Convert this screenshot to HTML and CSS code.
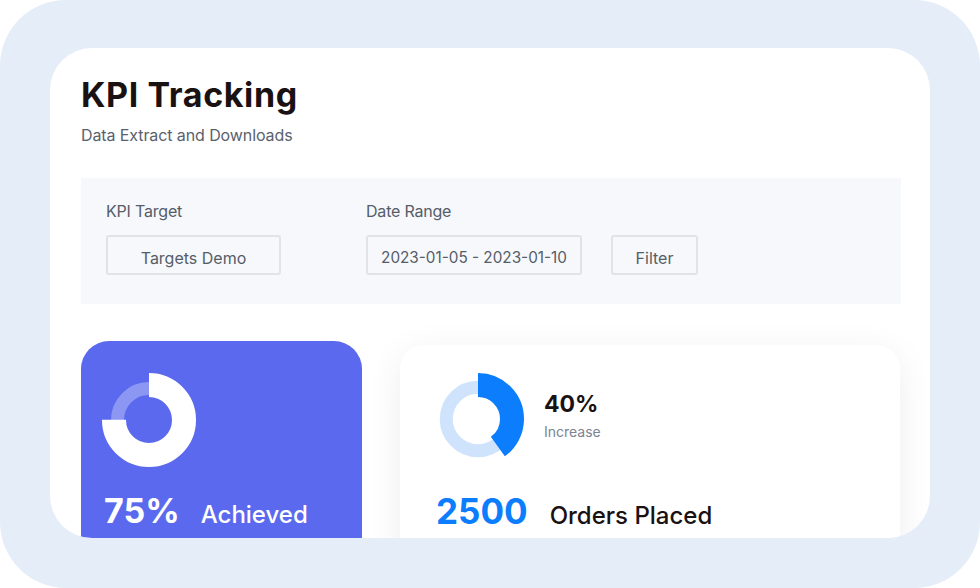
FILE: index.html
```html
<!DOCTYPE html>
<html>
<head>
<meta charset="utf-8">
<link rel="stylesheet" href="styles.css">
</head>
<body>
<div class="frame">
  <div class="sheet">
    <h1 class="title">KPI Tracking</h1>
    <p class="subtitle">Data Extract and Downloads</p>

    <div class="filters">
      <div class="field field-kpi">
        <div class="label">KPI Target</div>
        <div class="box box-kpi">Targets Demo</div>
      </div>
      <div class="field field-date">
        <div class="label">Date Range</div>
        <div class="box box-date">2023-01-05 - 2023-01-10</div>
      </div>
      <div class="box box-filter">Filter</div>
    </div>

    <div class="cards">
      <div class="card card-blue">
        <svg class="donut" width="94" height="94" viewBox="0 0 94 94">
          <circle cx="47" cy="47" r="31.5" fill="none" stroke="rgba(255,255,255,0.3)" stroke-width="13"/>
          <circle cx="47" cy="47" r="35" fill="none" stroke="#ffffff" stroke-width="24" stroke-dasharray="164.9 300" transform="rotate(-90 47 47)"/>
        </svg>
        <div class="stat">
          <span class="num num-white">75%</span>
          <span class="word word-white">Achieved</span>
        </div>
      </div>

      <div class="card card-white">
        <div class="top-row">
          <svg class="donut" width="94" height="94" viewBox="0 0 94 94">
            <circle cx="47" cy="47" r="31.75" fill="none" stroke="#cfe3fd" stroke-width="13"/>
            <circle cx="47" cy="47" r="34" fill="none" stroke="#0b7dfd" stroke-width="24" stroke-dasharray="85.5 300" transform="rotate(-90 47 47)"/>
          </svg>
          <div class="pct">
            <div class="pct-num">40%</div>
            <div class="pct-label">Increase</div>
          </div>
        </div>
        <div class="stat">
          <span class="num num-blue">2500</span>
          <span class="word word-dark">Orders Placed</span>
        </div>
      </div>
    </div>
  </div>
</div>
</body>
</html>
```

FILE: styles.css
```css
* { box-sizing: border-box; }
html, body {
  margin: 0;
  padding: 0;
  background: #ffffff;
}
body {
  font-family: Inter, "Noto Sans", sans-serif;
  width: 980px;
  height: 588px;
  overflow: hidden;
}
.frame {
  width: 980px;
  height: 588px;
  background: #e5edf8;
  border-radius: 66px;
  padding: 48px 50px 50px 50px;
}
.sheet {
  width: 880px;
  height: 490px;
  background: #ffffff;
  border-radius: 42px;
  overflow: hidden;
  padding: 27px 29px 0 31px;
}
.title {
  margin: 0;
  font-size: 34px;
  line-height: 40px;
  font-weight: 700;
  color: #1a1112;
  letter-spacing: 0.6px;
}
.subtitle {
  margin: 10px 0 0 0;
  font-size: 16px;
  line-height: 20px;
  color: #59616c;
  letter-spacing: -0.1px;
}
.filters {
  margin-top: 33px;
  width: 820px;
  height: 126px;
  background: #f6f8fb;
  padding: 23px 25px 0 25px;
  display: flex;
  align-items: flex-start;
}
.field { display: flex; flex-direction: column; }
.field-kpi { width: 260px; }
.label {
  font-size: 16px;
  line-height: 20px;
  color: #555d68;
  margin-bottom: 14px;
  letter-spacing: -0.2px;
}
.box {
  height: 40px;
  border: 2px solid #e0e3e8;
  border-radius: 3px;
  font-size: 16px;
  color: #555d68;
  display: flex;
  align-items: center;
  justify-content: center;
  padding-top: 5px;
  background: #f6f8fb;
}
.box-kpi { width: 175px; }
.box-date { width: 216px; font-size: 15.3px; }
.box-filter { width: 87px; margin-left: 29px; margin-top: 34px; }

.cards {
  margin-top: 37px;
  display: flex;
  align-items: flex-start;
  gap: 38px;
}
.card {
  height: 260px;
}
.card-blue {
  width: 281px;
  background: #5b69ee;
  border-radius: 28px;
  padding: 32px 21px 0 21px;
}
.card-white {
  width: 500px;
  margin-top: 4px;
  background: #ffffff;
  border-radius: 24px;
  box-shadow: 0 8px 36px rgba(20, 30, 60, 0.07);
  padding: 27px 31px 0 31px;
}
.donut { display: block; }
.stat {
  display: flex;
  align-items: baseline;
  margin-top: 22px;
  line-height: 44px;
}
.card-white .stat { margin-top: 23px; margin-left: 5px; }
.num {
  font-size: 34px;
  font-weight: 700;
}
.num-white { color: #ffffff; margin-left: 2px; }
.num-blue { color: #0b7dfd; font-size: 35px; }
.word {
  font-size: 24px;
  font-weight: 500;
  margin-left: 21px;
}
.word-white { color: #ffffff; }
.word-dark { color: #1a1112; margin-left: 22px; }
.top-row {
  display: flex;
  align-items: flex-start;
}
.pct {
  margin-left: 19px;
  padding-top: 18px;
}
.pct-num {
  font-size: 23px;
  line-height: 28px;
  font-weight: 700;
  color: #1a1112;
}
.pct-label {
  margin-top: 5px;
  font-size: 14px;
  line-height: 18px;
  color: #7b8491;
}
```
